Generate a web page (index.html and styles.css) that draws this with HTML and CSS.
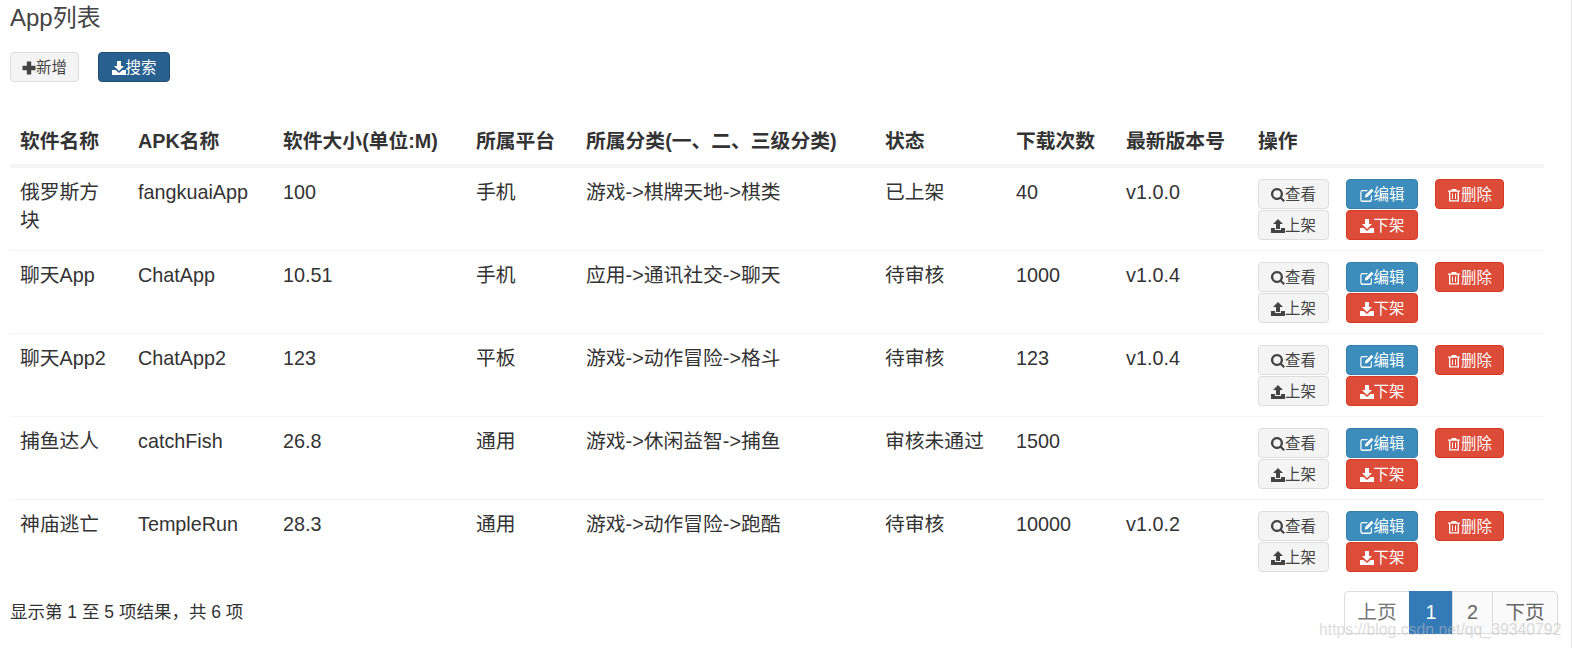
FILE: index.html
```html
<!DOCTYPE html>
<html lang="zh-CN">
<head>
    <meta charset="UTF-8">
    <title>App列表</title>
    <link rel="stylesheet" href="styles.css">
</head>
<body>
    <!-- 图标 -->
    <svg class="icon-defs" aria-hidden="true">
        <symbol id="i-plus" viewBox="0 0 14 14"><path d="M4.800 0.500h4.400v4.300h4.300v4.400H9.200v4.300H4.800V9.200H0.500V4.800h4.300z"/></symbol>
        <symbol id="i-download" viewBox="0 0 14 14"><path d="M5 0h4v5h3L7 10 2 5h3z"/><path d="M0 9h3.500L7 12l3.500-3H14v5H0z"/></symbol>
        <symbol id="i-upload" viewBox="0 0 14 14"><path d="M7 0l5 5H9v5H5V5H2z"/><path d="M0 9h4v2h6V9h4v5H0z"/></symbol>
        <symbol id="i-search" viewBox="0 0 14 14"><path fill-rule="evenodd" d="M6 0a6 6 0 0 1 4.900 9.400l3.100 3.100-1.500 1.500-3.100-3.100A6 6 0 1 1 6 0zm0 2.300a3.700 3.700 0 1 0 0 7.400 3.700 3.700 0 0 0 0-7.400z"/></symbol>
        <symbol id="i-edit" viewBox="0 0 14 14"><path d="M2.500 2H8L6.800 3.200H2.500a1 1 0 0 0-1 1v7.300a1 1 0 0 0 1 1h7.300a1 1 0 0 0 1-1V8l1.200-1.200v5A2.200 2.200 0 0 1 9.800 14H2.500A2.200 2.200 0 0 1 .3 11.800V4.200A2.200 2.200 0 0 1 2.500 2z"/><path d="M11.500 .8l2 2L7.500 9 4.800 9.600 5.400 6.800z"/></symbol>
        <symbol id="i-trash" viewBox="0 0 14 14"><path fill-rule="evenodd" d="M5 1h4l1 1.500h3v1.300h-1V13.500H2V3.800H1V2.500h3zM3.400 3.800v8.400h7.200V3.800zM5 5.500h1v5.500H5zm3 0h1v5.500H8z"/></symbol>
    </svg>

    <div class="app-list">
        <h3 class="page-title">App列表</h3>

        <div class="toolbar">
            <a class="btn btn-default"><svg class="icon"><use href="#i-plus"/></svg>新增</a>
            <a class="btn btn-search"><svg class="icon"><use href="#i-download"/></svg>搜索</a>
        </div>

        <table class="data-table">
            <colgroup>
                <col class="c-name"><col class="c-apk"><col class="c-size"><col class="c-platform"><col class="c-category"><col class="c-status"><col class="c-downloads"><col class="c-version"><col>
            </colgroup>
            <thead>
                <tr>
                    <th>软件名称</th><th>APK名称</th><th>软件大小(单位:M)</th><th>所属平台</th><th>所属分类(一、二、三级分类)</th><th>状态</th><th>下载次数</th><th>最新版本号</th><th>操作</th>
                </tr>
            </thead>
            <tbody>
                <tr>
                    <td>俄罗斯方块</td><td>fangkuaiApp</td><td>100</td><td>手机</td><td>游戏-&gt;棋牌天地-&gt;棋类</td><td>已上架</td><td>40</td><td>v1.0.0</td>
                    <td><div class="actions">
                        <a class="btn btn-default"><svg class="icon"><use href="#i-search"/></svg>查看</a>
                        <a class="btn btn-info"><svg class="icon"><use href="#i-edit"/></svg>编辑</a>
                        <a class="btn btn-danger"><svg class="icon"><use href="#i-trash"/></svg>删除</a>
                        <a class="btn btn-default"><svg class="icon"><use href="#i-upload"/></svg>上架</a>
                        <a class="btn btn-danger"><svg class="icon"><use href="#i-download"/></svg>下架</a>
                    </div></td>
                </tr>
                <tr>
                    <td>聊天App</td><td>ChatApp</td><td>10.51</td><td>手机</td><td>应用-&gt;通讯社交-&gt;聊天</td><td>待审核</td><td>1000</td><td>v1.0.4</td>
                    <td><div class="actions">
                        <a class="btn btn-default"><svg class="icon"><use href="#i-search"/></svg>查看</a>
                        <a class="btn btn-info"><svg class="icon"><use href="#i-edit"/></svg>编辑</a>
                        <a class="btn btn-danger"><svg class="icon"><use href="#i-trash"/></svg>删除</a>
                        <a class="btn btn-default"><svg class="icon"><use href="#i-upload"/></svg>上架</a>
                        <a class="btn btn-danger"><svg class="icon"><use href="#i-download"/></svg>下架</a>
                    </div></td>
                </tr>
                <tr>
                    <td>聊天App2</td><td>ChatApp2</td><td>123</td><td>平板</td><td>游戏-&gt;动作冒险-&gt;格斗</td><td>待审核</td><td>123</td><td>v1.0.4</td>
                    <td><div class="actions">
                        <a class="btn btn-default"><svg class="icon"><use href="#i-search"/></svg>查看</a>
                        <a class="btn btn-info"><svg class="icon"><use href="#i-edit"/></svg>编辑</a>
                        <a class="btn btn-danger"><svg class="icon"><use href="#i-trash"/></svg>删除</a>
                        <a class="btn btn-default"><svg class="icon"><use href="#i-upload"/></svg>上架</a>
                        <a class="btn btn-danger"><svg class="icon"><use href="#i-download"/></svg>下架</a>
                    </div></td>
                </tr>
                <tr>
                    <td>捕鱼达人</td><td>catchFish</td><td>26.8</td><td>通用</td><td>游戏-&gt;休闲益智-&gt;捕鱼</td><td>审核未通过</td><td>1500</td><td></td>
                    <td><div class="actions">
                        <a class="btn btn-default"><svg class="icon"><use href="#i-search"/></svg>查看</a>
                        <a class="btn btn-info"><svg class="icon"><use href="#i-edit"/></svg>编辑</a>
                        <a class="btn btn-danger"><svg class="icon"><use href="#i-trash"/></svg>删除</a>
                        <a class="btn btn-default"><svg class="icon"><use href="#i-upload"/></svg>上架</a>
                        <a class="btn btn-danger"><svg class="icon"><use href="#i-download"/></svg>下架</a>
                    </div></td>
                </tr>
                <tr>
                    <td>神庙逃亡</td><td>TempleRun</td><td>28.3</td><td>通用</td><td>游戏-&gt;动作冒险-&gt;跑酷</td><td>待审核</td><td>10000</td><td>v1.0.2</td>
                    <td><div class="actions">
                        <a class="btn btn-default"><svg class="icon"><use href="#i-search"/></svg>查看</a>
                        <a class="btn btn-info"><svg class="icon"><use href="#i-edit"/></svg>编辑</a>
                        <a class="btn btn-danger"><svg class="icon"><use href="#i-trash"/></svg>删除</a>
                        <a class="btn btn-default"><svg class="icon"><use href="#i-upload"/></svg>上架</a>
                        <a class="btn btn-danger"><svg class="icon"><use href="#i-download"/></svg>下架</a>
                    </div></td>
                </tr>
            </tbody>
        </table>

        <div class="table-footer">
            <div class="table-info">显示第 1 至 5 项结果，共 6 项</div>
            <ul class="pagination">
                <li class="disabled">上页</li>
                <li class="active">1</li>
                <li class="num">2</li>
                <li>下页</li>
            </ul>
        </div>
    </div>

    <!-- 图片水印 -->
    <div class="watermark">https://blog.csdn.net/qq_39340792</div>
</body>
</html>
```

FILE: styles.css
```css
/* 全局样式 */
* {
    margin: 0;
    padding: 0;
    box-sizing: border-box;
}

html, body {
    height: 648px;
    overflow: hidden;
}

body {
    position: relative;
    font-family: "Liberation Sans", "Noto Sans CJK SC", sans-serif;
    font-size: 19.8px;
    line-height: 28px;
    color: #333;
    background: #fff;
    border-right: 1px solid #e6e6e6;
}

.icon-defs {
    display: none;
}

.app-list {
    width: 1558px;
    padding-left: 10px;
}

.page-title {
    padding-top: 1px;
    font-size: 24px;
    font-weight: 400;
    line-height: 34px;
    color: #444;
}

/* 按钮 */
.toolbar {
    display: flex;
    gap: 19px;
    margin-top: 17px;
    margin-bottom: 33px;
}

.btn {
    display: flex;
    align-items: center;
    justify-content: center;
    height: 30px;
    padding-top: 1px;
    font-size: 15.4px;
    line-height: 20px;
    border: 1px solid transparent;
    border-radius: 4px;
}

.icon {
    width: 14px;
    height: 14px;
    fill: currentColor;
    flex-shrink: 0;
}

.btn-default {
    color: #444;
    background: #f4f4f4;
    border-color: #ddd;
}

.toolbar .btn-default {
    width: 69px;
}

.btn-search {
    width: 72px;
    color: #fff;
    background: #286090;
    border-color: #204d74;
}

.btn-info {
    color: #fff;
    background: #3c8dbc;
    border-color: #367fa9;
}

.btn-danger {
    color: #fff;
    background: #dd4b39;
    border-color: #d73925;
}

/* 表格 */
.data-table {
    width: 1534px;
    table-layout: fixed;
    border-collapse: collapse;
}

.c-name { width: 118px; }
.c-apk { width: 145px; }
.c-size { width: 193px; }
.c-platform { width: 110px; }
.c-category { width: 299px; }
.c-status { width: 131px; }
.c-downloads { width: 110px; }
.c-version { width: 132px; }

.data-table th {
    padding: 12px 10px 9px;
    height: 50px;
    font-weight: 700;
    text-align: left;
    color: #333;
    white-space: nowrap;
    border-bottom: 4px solid #f4f4f4;
}

.data-table td {
    padding: 10px 10px 10px;
    vertical-align: top;
    border-top: 1px solid #f4f4f4;
}

.data-table tbody tr:first-child td {
    border-top: 0;
}

.actions {
    display: grid;
    grid-template-columns: 71px 72px 69px;
    column-gap: 17px;
    row-gap: 1px;
    margin-top: 1px;
}

/* 底部分页 */
.table-footer {
    display: flex;
    justify-content: space-between;
    align-items: flex-start;
    margin-top: 9px;
}

.table-info {
    margin-top: 8px;
    font-size: 17.5px;
    line-height: 26px;
    color: #333;
}

.pagination {
    display: flex;
    list-style: none;
    height: 43px;
    line-height: 41px;
    color: #666;
}

.pagination li {
    width: 66px;
    text-align: center;
    background: #fafafa;
    border: 1px solid #ddd;
    margin-left: -1px;
}

.pagination .disabled {
    background: #fff;
    color: #777;
    border-radius: 4px 0 0 4px;
}

.pagination .active {
    width: 44px;
    color: #fff;
    background: #337ab7;
    border-color: #337ab7;
}

.pagination .num {
    width: 41px;
}

.pagination li:last-child {
    border-radius: 0 4px 4px 0;
}

.watermark {
    position: absolute;
    top: 619px;
    left: 1319px;
    font-size: 15.8px;
    line-height: 22px;
    color: rgba(190, 190, 190, 0.55);
    white-space: nowrap;
}
```
